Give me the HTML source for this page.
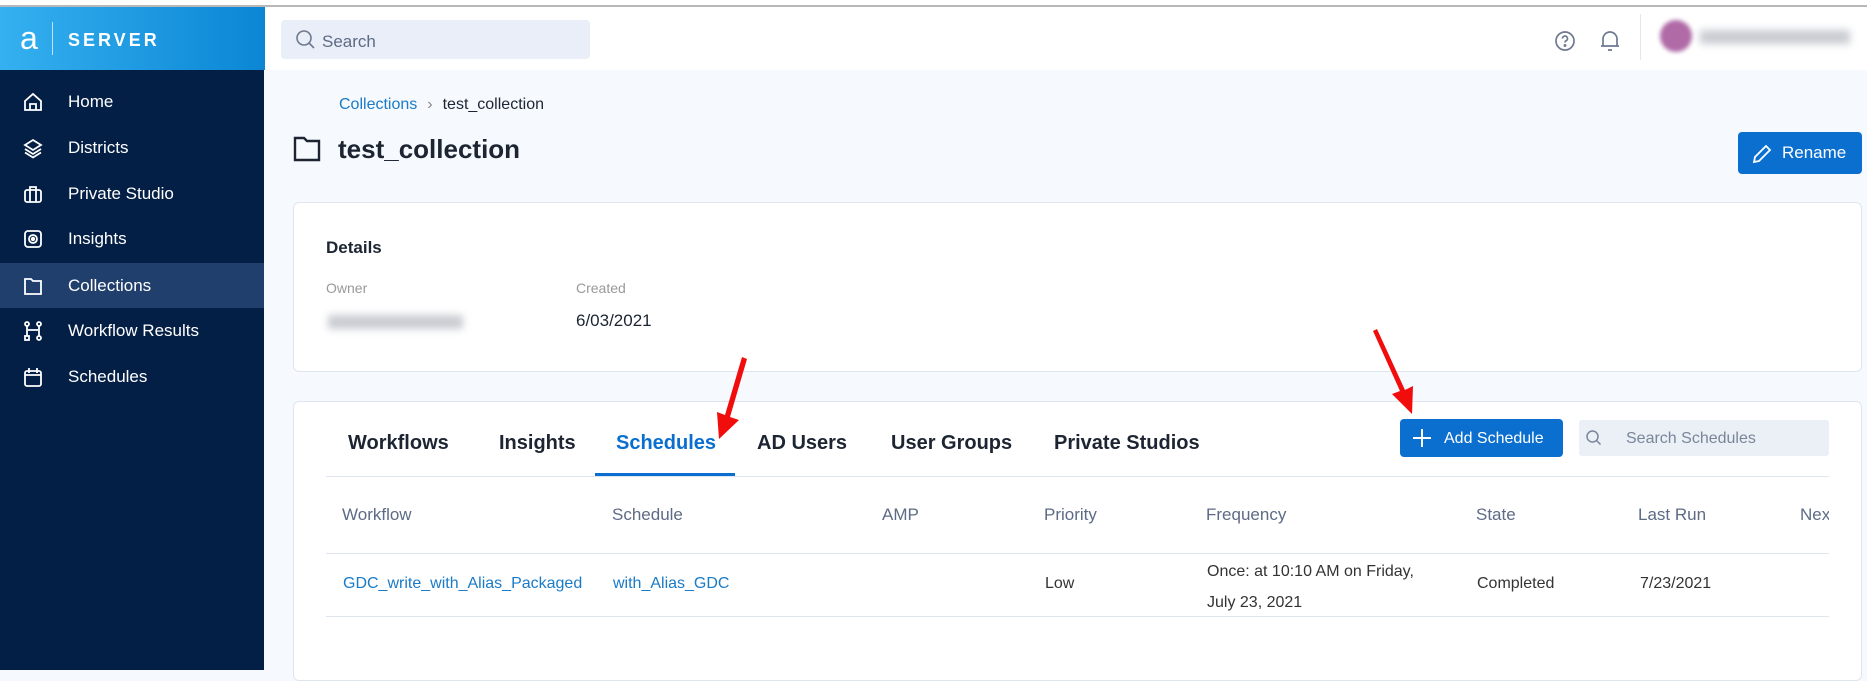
<!DOCTYPE html>
<html><head><meta charset="utf-8"><style>
*{margin:0;padding:0;box-sizing:border-box}
body{width:1867px;height:660px;overflow:hidden;background:#f6f9fd;font-family:"Liberation Sans",sans-serif;position:relative;color:#1d2533}
.a{position:absolute;white-space:nowrap}
#topline{left:0;top:0;width:1867px;height:7px;background:#fff;border-bottom:2px solid #b8b8b8}
#logo{left:0;top:7px;width:265px;height:63px;background:linear-gradient(90deg,#35b0f0,#0a86d4)}
#side{left:0;top:70px;width:264px;height:600px;background:#041f45}
#hdr{left:265px;top:7px;width:1602px;height:63px;background:#fff}
.nav{left:68px;color:#fff;font-size:17px}
.ic{left:22px;width:22px;height:22px}
.hd{color:#5d6b85;font-size:17px}
.td{font-size:16px;color:#333}
.lk{color:#1a7bc7}
.tab{font-size:20px;font-weight:bold;color:#1d2533;top:432px}
</style></head><body>
<div class="a" id="topline"></div>
<div class="a" id="logo"></div>
<div class="a" style="left:20px;top:22px;color:#fff;font-size:32px;line-height:32px">a</div>
<div class="a" style="left:52px;top:22px;width:1px;height:33px;background:#bfe3f8"></div>
<div class="a" style="left:68px;top:30px;color:#fff;font-size:18px;font-weight:bold;letter-spacing:3px">SERVER</div>
<div class="a" id="side"></div>
<div class="a" style="left:0;top:263px;width:264px;height:45px;background:#213f6c"></div>
<div class="a" id="hdr"></div>
<div class="a" style="left:281px;top:20px;width:309px;height:39px;background:#e9eef8;border-radius:4px"></div>
<svg class="a" style="left:295px;top:29px" width="22" height="22" viewBox="0 0 22 22" fill="none" stroke="#6d7a90" stroke-width="1.6"><circle cx="9" cy="9" r="7"/><path d="M14 14l5 5"/></svg>
<div class="a" style="left:322px;top:32px;color:#5d6b85;font-size:17px">Search</div>
<svg class="a" style="left:1553px;top:29px" width="24" height="24" viewBox="0 0 24 24" fill="none" stroke="#6d7a90" stroke-width="1.7"><circle cx="12" cy="12" r="9"/><path d="M9.5 9.5a2.5 2.5 0 1 1 3.5 2.3c-.7.4-1 .9-1 1.7"/><circle cx="12" cy="16.5" r=".6" fill="#6d7a90"/></svg>
<svg class="a" style="left:1598px;top:28px" width="24" height="26" viewBox="0 0 24 26" fill="none" stroke="#6d7a90" stroke-width="1.7"><path d="M5 18V11a7 7 0 0 1 14 0v7H5zM3 18h18M10 22h4"/></svg>
<div class="a" style="left:1640px;top:14px;width:1px;height:46px;background:#e2e6ee"></div>
<div class="a" style="left:1660px;top:20px;width:32px;height:32px;border-radius:50%;background:#b06aa6;filter:blur(2px)"></div>
<div class="a" style="left:1700px;top:30px;width:150px;height:14px;background:#c9ccd2;filter:blur(4px)"></div>

<svg class="a ic" style="top:91px" viewBox="0 0 22 22" fill="none" stroke="#fff" stroke-width="1.8"><path d="M3 10l8-7 8 7v9H3z M8 19v-6h6v6"/></svg>
<div class="a nav" style="top:92px">Home</div>
<svg class="a ic" style="top:137px" viewBox="0 0 22 22" fill="none" stroke="#fff" stroke-width="1.8"><path d="M11 3l8 5-8 5-8-5z M3 12l8 5 8-5 M3 15.5l8 5 8-5"/></svg>
<div class="a nav" style="top:138px">Districts</div>
<svg class="a ic" style="top:183px" viewBox="0 0 22 22" fill="none" stroke="#fff" stroke-width="1.8"><rect x="3" y="7" width="16" height="12" rx="2"/><path d="M8 7V4h6v3M8 7v12M14 7v12"/></svg>
<div class="a nav" style="top:184px">Private Studio</div>
<svg class="a ic" style="top:228px" viewBox="0 0 22 22" fill="none" stroke="#fff" stroke-width="1.8"><rect x="3" y="3" width="16" height="16" rx="3"/><circle cx="11" cy="11" r="4"/><circle cx="11" cy="11" r="1.3" fill="#fff"/></svg>
<div class="a nav" style="top:229px">Insights</div>
<svg class="a ic" style="top:275px" viewBox="0 0 22 22" fill="none" stroke="#fff" stroke-width="1.8"><path d="M3 4h6l2 2h8v13H3z"/></svg>
<div class="a nav" style="top:276px">Collections</div>
<svg class="a ic" style="top:320px" viewBox="0 0 22 22" fill="none" stroke="#fff" stroke-width="1.8"><circle cx="5" cy="4" r="2"/><circle cx="17" cy="4" r="2"/><rect x="3" y="16" width="4" height="4"/><circle cx="17" cy="18" r="2"/><path d="M5 6v10M17 6v10M6 10h10"/></svg>
<div class="a nav" style="top:321px">Workflow Results</div>
<svg class="a ic" style="top:366px" viewBox="0 0 22 22" fill="none" stroke="#fff" stroke-width="1.8"><rect x="3" y="5" width="16" height="15" rx="2"/><path d="M3 9h16M7 2v5M15 2v5"/></svg>
<div class="a nav" style="top:367px">Schedules</div>

<div class="a" style="left:339px;top:96px;font-size:16px"><span style="color:#1a7bc7">Collections</span><span style="color:#888;margin:0 10px">›</span><span>test_collection</span></div>
<svg class="a" style="left:292px;top:134px" width="30" height="30" viewBox="0 0 30 30" fill="none" stroke="#1d2533" stroke-width="2.4"><path d="M3 4h9l3 3h12v19H3z"/></svg>
<div class="a" style="left:338px;top:134px;font-size:26px;font-weight:bold">test_collection</div>
<div class="a" style="left:1738px;top:132px;width:124px;height:42px;background:#0b6fd0;border-radius:4px"></div>
<svg class="a" style="left:1750px;top:142px" width="24" height="24" viewBox="0 0 24 24" fill="none" stroke="#fff" stroke-width="1.8"><path d="M4 20l1-5L16 4l4 4L9 19z"/></svg>
<div class="a" style="left:1782px;top:143px;color:#fff;font-size:17px">Rename</div>

<div class="a" style="left:293px;top:202px;width:1569px;height:170px;background:#fff;border:1px solid #dfe5ef;border-radius:6px"></div>
<div class="a" style="left:326px;top:238px;font-size:17px;font-weight:bold">Details</div>
<div class="a" style="left:326px;top:280px;font-size:14px;color:#999">Owner</div>
<div class="a" style="left:576px;top:280px;font-size:14px;color:#999">Created</div>
<div class="a" style="left:328px;top:315px;width:135px;height:14px;background:#c9ccd2;filter:blur(4px)"></div>
<div class="a" style="left:576px;top:311px;font-size:17px">6/03/2021</div>

<div class="a" style="left:293px;top:401px;width:1569px;height:280px;background:#fff;border:1px solid #dfe5ef;border-radius:6px"></div>
<div class="a tab" style="left:348px">Workflows</div>
<div class="a tab" style="left:499px">Insights</div>
<div class="a tab" style="left:616px;color:#0b6fd0">Schedules</div>
<div class="a tab" style="left:757px">AD Users</div>
<div class="a tab" style="left:891px">User Groups</div>
<div class="a tab" style="left:1054px">Private Studios</div>
<div class="a" style="left:326px;top:476px;width:1503px;height:1px;background:#dfe5ef"></div>
<div class="a" style="left:595px;top:473px;width:140px;height:3px;background:#0b6fd0"></div>
<div class="a" style="left:1400px;top:419px;width:163px;height:38px;background:#0b6fd0;border-radius:4px"></div>
<svg class="a" style="left:1412px;top:428px" width="20" height="20" viewBox="0 0 20 20" stroke="#fff" stroke-width="2"><path d="M10 1v18M1 10h18"/></svg>
<div class="a" style="left:1444px;top:430px;color:#fff;font-size:16px">Add Schedule</div>
<div class="a" style="left:1579px;top:420px;width:250px;height:36px;background:#ebeff6;border-radius:3px"></div>
<svg class="a" style="left:1585px;top:429px" width="18" height="18" viewBox="0 0 18 18" fill="none" stroke="#7a869a" stroke-width="1.5"><circle cx="7.5" cy="7.5" r="5.5"/><path d="M11.5 11.5l4 4"/></svg>
<div class="a" style="left:1626px;top:430px;color:#7a869a;font-size:16px">Search Schedules</div>

<div class="a hd" style="left:342px;top:505px">Workflow</div>
<div class="a hd" style="left:612px;top:505px">Schedule</div>
<div class="a hd" style="left:882px;top:505px">AMP</div>
<div class="a hd" style="left:1044px;top:505px">Priority</div>
<div class="a hd" style="left:1206px;top:505px">Frequency</div>
<div class="a hd" style="left:1476px;top:505px">State</div>
<div class="a hd" style="left:1638px;top:505px">Last Run</div>
<div class="a hd" style="left:1800px;top:505px;width:29px;overflow:hidden">Next</div>
<div class="a" style="left:326px;top:553px;width:1503px;height:1px;background:#dfe5ef"></div>
<div class="a td lk" style="left:343px;top:575px">GDC_write_with_Alias_Packaged</div>
<div class="a td lk" style="left:613px;top:575px">with_Alias_GDC</div>
<div class="a td" style="left:1045px;top:575px">Low</div>
<div class="a td" style="left:1207px;top:556px;line-height:31px">Once: at 10:10 AM on Friday,<br>July 23, 2021</div>
<div class="a td" style="left:1477px;top:575px">Completed</div>
<div class="a td" style="left:1640px;top:575px">7/23/2021</div>
<div class="a" style="left:326px;top:616px;width:1503px;height:1px;background:#dfe5ef"></div>

<svg class="a" style="left:0;top:0" width="1867" height="660"><g fill="#f20d0d"><path d="M742 357l5 2-17 58 9 3-20 19-2-27 8 3z"/><path d="M1373 331l4-2 28 61 8-4-1 28-20-20 8-3z"/></g></svg>
</body></html>
